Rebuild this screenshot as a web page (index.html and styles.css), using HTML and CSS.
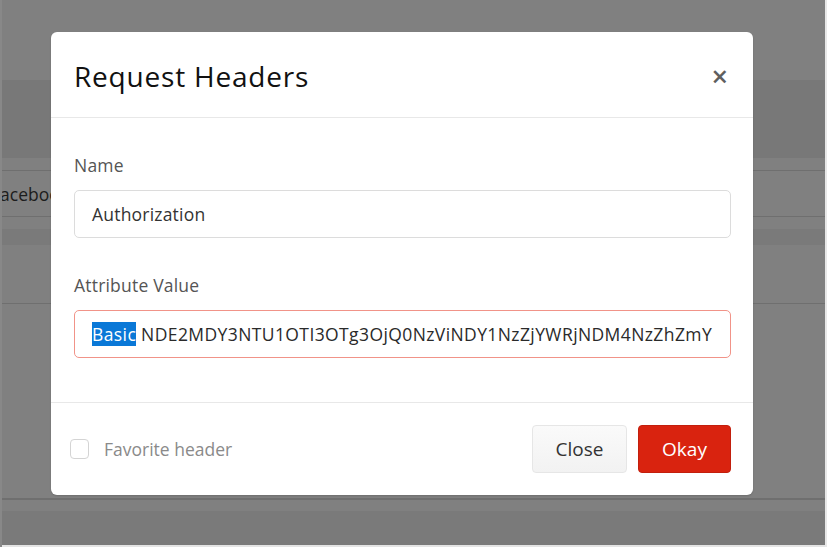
FILE: index.html
```html
<!DOCTYPE html>
<html>
<head>
<meta charset="utf-8">
<link rel="stylesheet" href="styles.css">
</head>
<body>
<div class="page">
  <div class="band b-top"></div>
  <div class="band b-dark1"></div>
  <div class="band b-gap1"></div>
  <div class="band b-row"><span class="row-text">Facebook</span></div>
  <div class="band b-gap2"></div>
  <div class="band b-dark2"></div>
  <div class="band b-row2"></div>
  <div class="band b-main"></div>
  <div class="band b-gap3"></div>
  <div class="band b-dark3"></div>
  <div class="band b-edge"></div>
</div>

<div class="modal">
  <div class="modal-header">
    <h2 class="modal-title">Request Headers</h2>
    <span class="modal-close">&times;</span>
  </div>
  <div class="modal-body">
    <label class="field-label">Name</label>
    <div class="field-input">Authorization</div>
    <label class="field-label second">Attribute Value</label>
    <div class="field-input invalid value"><span class="sel">Basic</span> NDE2MDY3NTU1OTI3OTg3OjQ0NzViNDY1NzZjYWRjNDM4NzZhZmY</div>
  </div>
  <div class="modal-footer">
    <label class="fav"><span class="checkbox"></span><span class="fav-text">Favorite header</span></label>
    <div class="buttons">
      <button class="btn btn-default">Close</button>
      <button class="btn btn-primary">Okay</button>
    </div>
  </div>
</div>
</body>
</html>
```
FILE: styles.css
```css
html, body {
  margin: 0;
  padding: 0;
}
body {
  width: 827px;
  height: 547px;
  overflow: hidden;
  background: #808080;
  font-family: "Open Sans", "Noto Sans", sans-serif;
  position: relative;
}
.page {
  display: flex;
  flex-direction: column;
  width: 827px;
  height: 547px;
  box-sizing: border-box;
  border-left: 2px solid #888;
  border-right: 2px solid #e8e8e8;
}
.band { flex: none; }
.b-top { height: 80px; background: #808080; }
.b-dark1 { height: 78px; background: #787878; }
.b-gap1 { height: 12px; background: #808080; border-bottom: 1px solid #6f6f6f; }
.b-row {
  height: 45px;
  background: #808080;
  border-bottom: 1px solid #6f6f6f;
  display: flex;
  align-items: center;
  overflow: hidden;
}
.row-text {
  margin-left: -11px;
  font-size: 17.5px;
  color: #1c1c1c;
}
.b-gap2 { height: 12px; background: #808080; }
.b-dark2 { height: 16px; background: #7a7a7a; }
.b-row2 { height: 58px; background: #808080; border-bottom: 1px solid #6f6f6f; }
.b-main { height: 194px; background: #808080; border-bottom: 2px solid #6f6f6f; }
.b-gap3 { height: 11px; background: #808080; }
.b-dark3 { height: 34px; background: #7a7a7a; }
.b-edge { height: 2px; background: #e4e4e4; }

.modal {
  position: absolute;
  left: 51px;
  top: 32px;
  width: 702px;
  height: 463px;
  background: #fff;
  border-radius: 6px;
  display: flex;
  flex-direction: column;
  box-shadow: 0 1px 2px rgba(0,0,0,0.15);
}
.modal-header {
  height: 86px;
  box-sizing: border-box;
  display: flex;
  align-items: center;
  justify-content: space-between;
  padding: 2px 25px 0 23px;
  border-bottom: 1px solid #e8e8e8;
}
.modal-title {
  margin: 0;
  font-size: 28px;
  font-weight: 400;
  color: #111;
  letter-spacing: 0.8px;
}
.modal-close {
  font-size: 29px;
  color: #5f5f5f;
  line-height: 1;
  font-weight: 600;
}
.modal-body {
  padding: 37px 22px 44px 23px;
  display: flex;
  flex-direction: column;
}
.field-label {
  font-size: 17.5px;
  line-height: 20px;
  color: #555;
  margin-bottom: 15px;
  letter-spacing: 0.2px;
}
.field-label.second { margin-top: 37px; }
.field-input {
  height: 48px;
  box-sizing: border-box;
  border: 1px solid #dcdcdc;
  border-radius: 5px;
  padding: 0 17px;
  display: flex;
  align-items: center;
  font-size: 17.5px;
  color: #333;
  white-space: pre;
  overflow: hidden;
  letter-spacing: 0.2px;
}
.field-input.value {
  letter-spacing: 0.4px;
  color: #2a2a2a;
}
.field-input.invalid {
  border-color: #f19388;
}
.sel {
  background: #0a78d7;
  color: #fff;
}
.modal-footer {
  flex: 1;
  border-top: 1px solid #e8e8e8;
  display: flex;
  align-items: center;
  justify-content: space-between;
  padding: 0 22px 0 19px;
}
.fav {
  display: flex;
  align-items: center;
  gap: 15px;
}
.checkbox {
  width: 19px;
  height: 20px;
  box-sizing: border-box;
  border: 1px solid #d4d4d4;
  border-radius: 4px;
  background: #fff;
}
.fav-text {
  font-size: 17.5px;
  color: #8a8a8a;
}
.buttons {
  display: flex;
  gap: 11px;
}
.btn {
  height: 48px;
  font-family: inherit;
  font-size: 19px;
  border-radius: 4px;
  padding: 0;
}
.btn-default {
  width: 95px;
  background: linear-gradient(#fafafa, #f2f2f2);
  border: 1px solid #e6e6e6;
  color: #333;
}
.btn-primary {
  width: 93px;
  background: #d9230f;
  border: 1px solid #c21f0d;
  color: #fff;
}
```
